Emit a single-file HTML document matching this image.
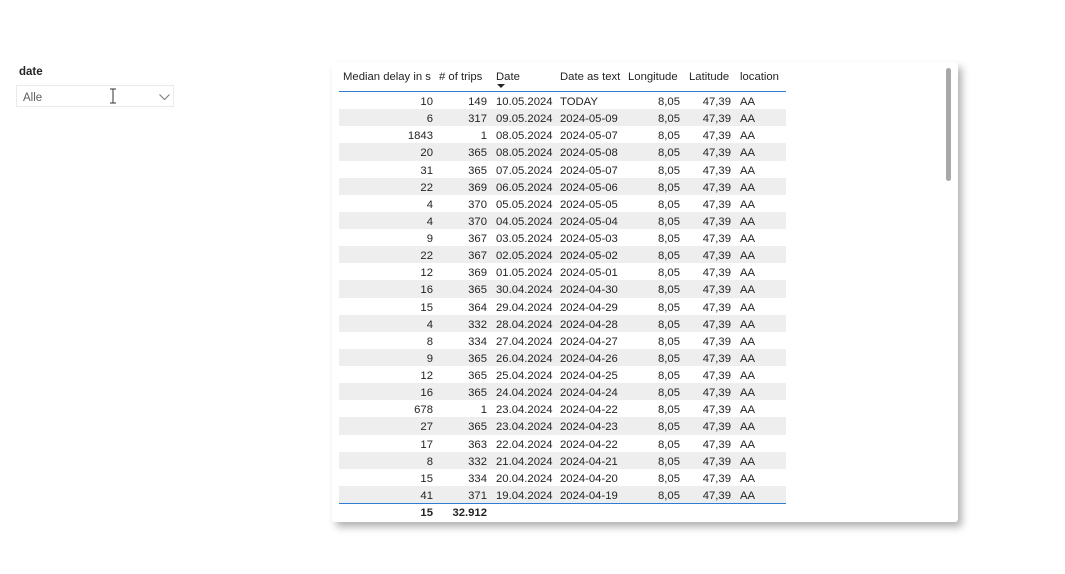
<!DOCTYPE html>
<html><head><style>
body{margin:0;width:1065px;height:574px;background:#fff;font-family:"Liberation Sans",sans-serif;position:relative;overflow:hidden;color:#252423}
.lbl{position:absolute;left:19px;top:66px;font-size:11.5px;font-weight:bold;color:#252423}
.dd{position:absolute;left:16px;top:85px;width:158px;height:22px;border:1px solid #eaeaea;box-sizing:border-box;font-size:11.5px;color:#605e5c}
.card{position:absolute;left:332px;top:62px;width:626px;height:460px;background:#fff;border-radius:3px;box-shadow:4px 5px 8px rgba(0,0,0,0.3)}
.sb{position:absolute;left:946px;top:68px;width:5px;height:113px;background:#a9a7a7;border-radius:3px}
table{position:absolute;left:339px;top:62px;border-collapse:collapse;font-size:11.3px;table-layout:fixed}
td{padding:0;white-space:nowrap;overflow:hidden}
tbody td{padding-top:4px;height:13.13px;line-height:13px;box-sizing:content-box}
th{font-weight:normal;height:29px;vertical-align:middle;padding:0;white-space:nowrap;text-align:left;position:relative;border-bottom:1px solid #2c7fd0}
.r{text-align:right;padding-right:4px}
.l{padding-left:5px}
tbody tr:nth-child(even) td{background:#eeeeee}
tfoot td{font-weight:bold;border-top:1px solid #2c7fd0;height:18px;line-height:18px}
</style></head><body>
<div class="lbl">date</div>
<div class="dd"><span style="position:absolute;left:6px;top:6px">Alle</span>
<svg style="position:absolute;left:92px;top:2px" width="8" height="16"><path d="M1 1H7M4 1V15M1 15H7" stroke="#333" stroke-width="1" fill="none"/></svg>
<svg style="position:absolute;left:142px;top:8px" width="11" height="7"><path d="M0.5 0.5L5.5 5.5L10.5 0.5" stroke="#777" fill="none"/></svg></div>
<div class="card"></div>
<div class="sb"></div>
<table>
<colgroup><col style="width:98px"><col style="width:54px"><col style="width:64px"><col style="width:69px"><col style="width:60px"><col style="width:51px"><col style="width:51px"></colgroup>
<thead><tr><th class="l" style="padding-left:4px">Median delay in s</th><th class="l" style="padding-left:2px"># of trips</th><th class="l">Date<svg style="position:absolute;left:6px;top:22px" width="8" height="5"><path d="M0 0H8L4 4Z" fill="#252423"/></svg></th><th class="l">Date as text</th><th class="l" style="padding-left:4px">Longitude</th><th class="l" style="padding-left:5px">Latitude</th><th class="l">location</th></tr></thead>
<tbody>
<tr><td class="r">10</td><td class="r">149</td><td class="l">10.05.2024</td><td class="l">TODAY</td><td class="r">8,05</td><td class="r">47,39</td><td class="l">AA</td></tr>
<tr><td class="r">6</td><td class="r">317</td><td class="l">09.05.2024</td><td class="l">2024-05-09</td><td class="r">8,05</td><td class="r">47,39</td><td class="l">AA</td></tr>
<tr><td class="r">1843</td><td class="r">1</td><td class="l">08.05.2024</td><td class="l">2024-05-07</td><td class="r">8,05</td><td class="r">47,39</td><td class="l">AA</td></tr>
<tr><td class="r">20</td><td class="r">365</td><td class="l">08.05.2024</td><td class="l">2024-05-08</td><td class="r">8,05</td><td class="r">47,39</td><td class="l">AA</td></tr>
<tr><td class="r">31</td><td class="r">365</td><td class="l">07.05.2024</td><td class="l">2024-05-07</td><td class="r">8,05</td><td class="r">47,39</td><td class="l">AA</td></tr>
<tr><td class="r">22</td><td class="r">369</td><td class="l">06.05.2024</td><td class="l">2024-05-06</td><td class="r">8,05</td><td class="r">47,39</td><td class="l">AA</td></tr>
<tr><td class="r">4</td><td class="r">370</td><td class="l">05.05.2024</td><td class="l">2024-05-05</td><td class="r">8,05</td><td class="r">47,39</td><td class="l">AA</td></tr>
<tr><td class="r">4</td><td class="r">370</td><td class="l">04.05.2024</td><td class="l">2024-05-04</td><td class="r">8,05</td><td class="r">47,39</td><td class="l">AA</td></tr>
<tr><td class="r">9</td><td class="r">367</td><td class="l">03.05.2024</td><td class="l">2024-05-03</td><td class="r">8,05</td><td class="r">47,39</td><td class="l">AA</td></tr>
<tr><td class="r">22</td><td class="r">367</td><td class="l">02.05.2024</td><td class="l">2024-05-02</td><td class="r">8,05</td><td class="r">47,39</td><td class="l">AA</td></tr>
<tr><td class="r">12</td><td class="r">369</td><td class="l">01.05.2024</td><td class="l">2024-05-01</td><td class="r">8,05</td><td class="r">47,39</td><td class="l">AA</td></tr>
<tr><td class="r">16</td><td class="r">365</td><td class="l">30.04.2024</td><td class="l">2024-04-30</td><td class="r">8,05</td><td class="r">47,39</td><td class="l">AA</td></tr>
<tr><td class="r">15</td><td class="r">364</td><td class="l">29.04.2024</td><td class="l">2024-04-29</td><td class="r">8,05</td><td class="r">47,39</td><td class="l">AA</td></tr>
<tr><td class="r">4</td><td class="r">332</td><td class="l">28.04.2024</td><td class="l">2024-04-28</td><td class="r">8,05</td><td class="r">47,39</td><td class="l">AA</td></tr>
<tr><td class="r">8</td><td class="r">334</td><td class="l">27.04.2024</td><td class="l">2024-04-27</td><td class="r">8,05</td><td class="r">47,39</td><td class="l">AA</td></tr>
<tr><td class="r">9</td><td class="r">365</td><td class="l">26.04.2024</td><td class="l">2024-04-26</td><td class="r">8,05</td><td class="r">47,39</td><td class="l">AA</td></tr>
<tr><td class="r">12</td><td class="r">365</td><td class="l">25.04.2024</td><td class="l">2024-04-25</td><td class="r">8,05</td><td class="r">47,39</td><td class="l">AA</td></tr>
<tr><td class="r">16</td><td class="r">365</td><td class="l">24.04.2024</td><td class="l">2024-04-24</td><td class="r">8,05</td><td class="r">47,39</td><td class="l">AA</td></tr>
<tr><td class="r">678</td><td class="r">1</td><td class="l">23.04.2024</td><td class="l">2024-04-22</td><td class="r">8,05</td><td class="r">47,39</td><td class="l">AA</td></tr>
<tr><td class="r">27</td><td class="r">365</td><td class="l">23.04.2024</td><td class="l">2024-04-23</td><td class="r">8,05</td><td class="r">47,39</td><td class="l">AA</td></tr>
<tr><td class="r">17</td><td class="r">363</td><td class="l">22.04.2024</td><td class="l">2024-04-22</td><td class="r">8,05</td><td class="r">47,39</td><td class="l">AA</td></tr>
<tr><td class="r">8</td><td class="r">332</td><td class="l">21.04.2024</td><td class="l">2024-04-21</td><td class="r">8,05</td><td class="r">47,39</td><td class="l">AA</td></tr>
<tr><td class="r">15</td><td class="r">334</td><td class="l">20.04.2024</td><td class="l">2024-04-20</td><td class="r">8,05</td><td class="r">47,39</td><td class="l">AA</td></tr>
<tr><td class="r">41</td><td class="r">371</td><td class="l">19.04.2024</td><td class="l">2024-04-19</td><td class="r">8,05</td><td class="r">47,39</td><td class="l">AA</td></tr>
</tbody>
<tfoot><tr><td class="r">15</td><td class="r">32.912</td><td></td><td></td><td></td><td></td><td></td></tr></tfoot>
</table>
</body></html>
